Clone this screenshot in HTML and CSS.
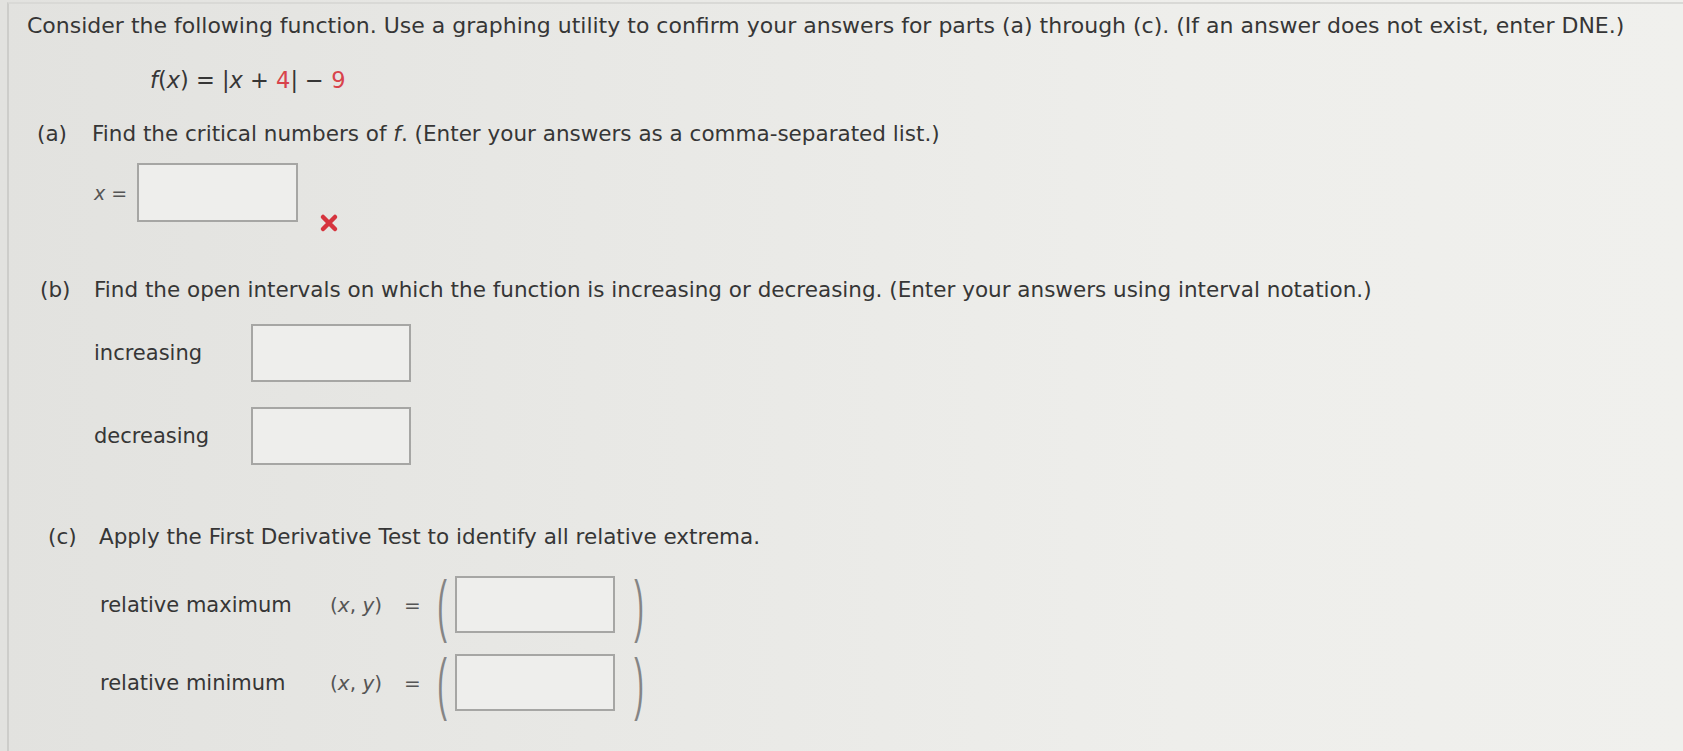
FILE: index.html
```html
<!DOCTYPE html>
<html>
<head>
<meta charset="utf-8">
<link rel="stylesheet" href="styles.css">
</head>
<body>
<div class="frame">
  <p class="intro">Consider the following function. Use a graphing utility to confirm your answers for parts (a) through (c). (If an answer does not exist, enter DNE.)</p>
  <div class="formula"><i>f</i>(<i>x</i>) = |<i>x</i> + <span class="red">4</span>| &minus; <span class="red">9</span></div>

  <section class="part part-a">
    <div class="q"><span class="lbl">(a)</span><span>Find the critical numbers of <i>f</i>. (Enter your answers as a comma-separated list.)</span></div>
    <div class="row row-x">
      <span class="var"><i>x</i> =</span>
      <span class="box box-x"></span>
      <svg class="xmark" width="20" height="20" viewBox="0 0 20 20"><path d="M4 4 L16 16 M16 4 L4 16" stroke="#d6343e" stroke-width="4.5" stroke-linecap="round"/></svg>
    </div>
  </section>

  <section class="part part-b">
    <div class="q"><span class="lbl">(b)</span><span>Find the open intervals on which the function is increasing or decreasing. (Enter your answers using interval notation.)</span></div>
    <div class="row row-b"><span class="name">increasing</span><span class="box"></span></div>
    <div class="row row-b"><span class="name">decreasing</span><span class="box"></span></div>
  </section>

  <section class="part part-c">
    <div class="q"><span class="lbl">(c)</span><span>Apply the First Derivative Test to identify all relative extrema.</span></div>
    <div class="row row-c"><span class="name">relative maximum</span><span class="xy">(<i>x</i>, <i>y</i>)<span class="eq">=</span></span><span class="paren">(</span><span class="box"></span><span class="paren">)</span></div>
    <div class="row row-c"><span class="name">relative minimum</span><span class="xy">(<i>x</i>, <i>y</i>)<span class="eq">=</span></span><span class="paren">(</span><span class="box"></span><span class="paren">)</span></div>
  </section>
</div>
</body>
</html>
```
FILE: styles.css
```css
html, body {
  margin: 0;
  padding: 0;
  height: 100%;
}
body {
  background: linear-gradient(90deg, #e2e2df 0%, #e8e8e5 35%, #eeeeeb 70%, #f0f0ed 100%);
  font-family: "DejaVu Sans", sans-serif;
  color: #363636;
  font-size: 22px;
  overflow: hidden;
}
.frame {
  margin-left: 7px;
  margin-top: 2px;
  border-left: 2px solid #cdcdca;
  border-top: 2px solid #d9d9d6;
  height: 749px;
  padding-left: 18px;
  box-sizing: border-box;
  overflow: hidden;
}
.intro {
  margin: 0;
  padding-top: 9px;
  line-height: 26px;
  white-space: nowrap;
}
.formula {
  margin-left: 123px;
  margin-top: 28px;
  line-height: 26px;
  font-size: 22.5px;
}
.red { color: #d8434b; }
.part { white-space: nowrap; font-size: 21.5px; }
.q { display: flex; line-height: 26px; }
.lbl { flex: none; }
.row { display: flex; align-items: center; }
.box {
  display: inline-block;
  box-sizing: border-box;
  width: 160px;
  height: 58px;
  border: 2px solid #a6a6a4;
  background: #eeeeec;
  flex: none;
}
.name { font-size: 21px; }

.part-a { margin-top: 28px; margin-left: 10px; }
.part-a .lbl { width: 55px; }
.row-x { margin-top: 16px; margin-left: 57px; }
.var { width: 43px; flex: none; color: #555; font-size: 19px; }
.box-x { width: 161px; height: 59px; }
.xmark { align-self: flex-end; margin-left: 21px; margin-bottom: -11px; }

.part-b { margin-top: 55px; margin-left: 13px; }
.part-b .lbl { width: 54px; }
.row-b { margin-left: 54px; }
.row-b .name { width: 157px; flex: none; }
.part-b .q + .row-b { margin-top: 21px; }
.row-b + .row-b { margin-top: 25px; }

.part-c { margin-top: 59px; margin-left: 21px; }
.part-c .lbl { width: 51px; }
.row-c { margin-left: 52px; height: 57px; }
.part-c .q + .row-c { margin-top: 26px; }
.row-c + .row-c { margin-top: 21px; }
.row-c .name { width: 230px; flex: none; }
.xy { width: 100px; color: #555; flex: none; font-size: 20px; }
.eq { margin-left: 22px; }
.paren {
  font-size: 69px;
  font-weight: normal;
  color: #858585;
  line-height: 57px;
  font-family: "Liberation Sans", sans-serif;
  transform: scaleX(0.42);
  display: inline-block;
  width: 25px;
  text-align: left;
  margin-top: 2px;
  flex: none;
}
.row-c .box { height: 57px; margin-right: 12px; }
```
